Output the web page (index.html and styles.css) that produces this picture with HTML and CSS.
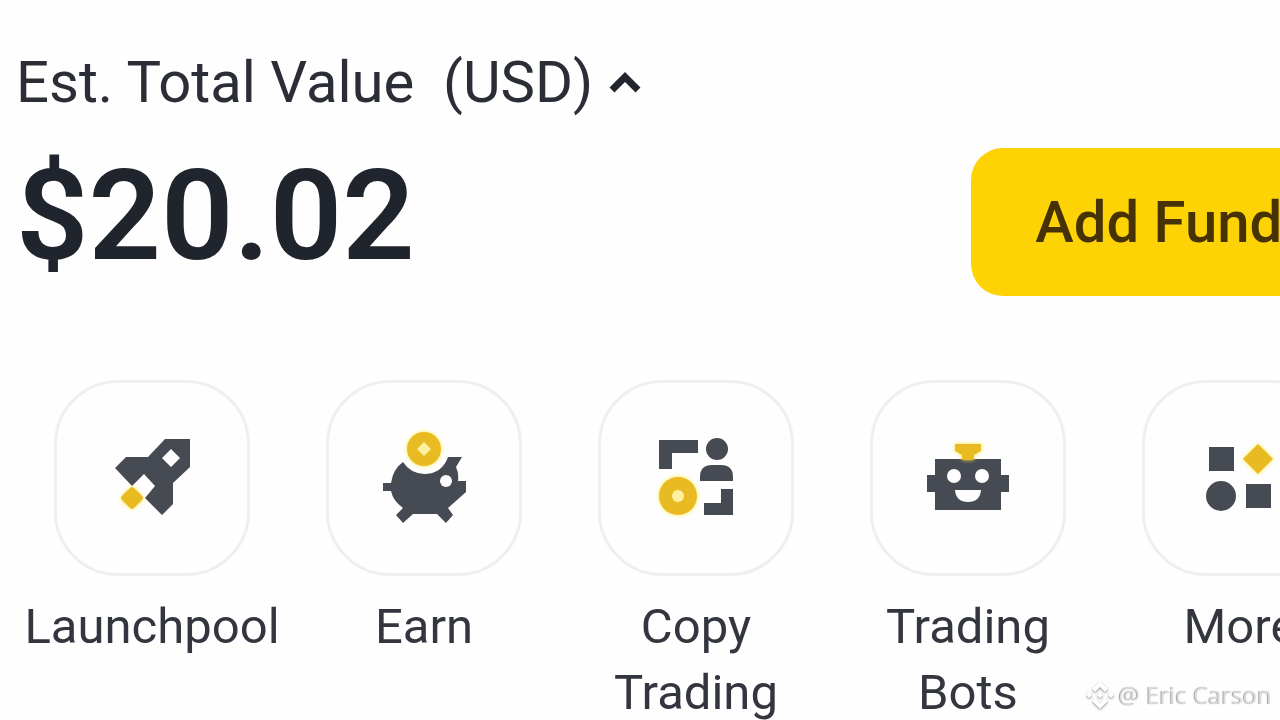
FILE: index.html
```
<!DOCTYPE html>
<html lang="en">

	<head>
		<meta charset="UTF-8">
		<meta name="viewport" content="width=device-width, initial-scale=1.0">
		<title>Wallet</title>
		<link rel="stylesheet" href="styles.css">
	</head>

	<body>
		<div class="wallet">
			<div class="title">
				<span>Est. Total Value&nbsp; (USD)</span>
				<button class="toggle" type="button" aria-label="Hide details">
					<svg width="32" height="24" viewBox="0 0 32 24"><path d="M3 20L16 7l13 13" /></svg>
				</button>
			</div>

			<div class="balance">
				<div class="amount">$20.02</div>
				<button class="add" type="button">Add Funds</button>
			</div>

			<!-- shortcuts -->
			<div class="menu">
				<a class="item" href="#">
					<span class="tile">
						<svg class="icon" viewBox="0 0 96 96">
							<path fill-rule="evenodd" d="M61 9h25v28L69 53v21L58 85 41 68l10-12-11-12-12 12-17-18 11-11h22zM67 19l-9 9 9 9 9-9z" />
							<path class="gold" d="M28 57q1 0 2 1l8 8q2 2 0 4l-8 8q-2 2-4 0l-8-8q-2-2 0-4l8-8q1-1 2-1z" />
						</svg>
					</span>
					<span class="label">Launchpool</span>
				</a>
				<a class="item" href="#">
					<span class="tile">
						<svg class="icon" viewBox="0 0 96 96">
							<path d="M27 32Q17 39 15 53H7v8h8q2 10 12 17l-7 7 7 8 10-9h24l9 9 7-8-5-7 18-16V51h-8q1-8-2-14l6-10H72Q66 44 48 44 34 43 27 32z" />
							<circle class="hole" cx="70" cy="51" r="6" />
							<circle class="gold" cx="48" cy="19" r="17" />
							<path class="shine" d="M48 12l7 7-7 7-7-7z" />
						</svg>
					</span>
					<span class="label">Earn</span>
				</a>
				<a class="item" href="#">
					<span class="tile">
						<svg class="icon" viewBox="0 0 96 96">
							<path d="M11 10h39v13H24v16H11zM73 59h12v26H56V73h17zM52 51v-4q0-12 12-12h9q12 0 12 12v4z" />
							<circle cx="69" cy="19" r="11" />
							<circle class="gold" cx="30" cy="66" r="19" />
							<circle class="shine" cx="30" cy="66" r="6" />
						</svg>
					</span>
					<span class="label">Copy Trading</span>
				</a>
				<a class="item" href="#">
					<span class="tile">
						<svg class="icon" viewBox="0 0 96 96">
							<path d="M15 29h66v16h8v17h-8v18H15V62H7V45h8z" />
							<circle class="hole" cx="34" cy="46" r="7" />
							<circle class="hole" cx="62" cy="46" r="7" />
							<path class="hole" d="M35 60h26q-1 12-13 12T35 60z" />
							<path class="gold" d="M35 14h26v7l-7 4v5H42v-5l-7-4z" />
						</svg>
					</span>
					<span class="label">Trading Bots</span>
				</a>
				<a class="item" href="#">
					<span class="tile">
						<svg class="icon" viewBox="0 0 96 96">
							<path d="M17 17h25v24H17zM54 54h25v24H54z" />
							<circle cx="29" cy="66" r="15" />
							<path class="gold" d="M66 14l15 15-15 15-15-15z" />
						</svg>
					</span>
					<span class="label">More</span>
				</a>
			</div>
		</div>

		<div class="watermark">
			<svg width="28" height="28" viewBox="0 0 28 28">
				<path d="M14 0l8 8-3 3-5-5-5 5-3-3zM14 28l8-8-3-3-5 5-5-5-3 3zM3 11l3 3-3 3-3-3zM25 11l3 3-3 3-3-3zM14 11l3 3-3 3-3-3z" />
			</svg>
			<span>@ Eric Carson</span>
		</div>
	</body>

</html>
```
FILE: styles.css
```
* {
	margin: 0;
	padding: 0;
	box-sizing: border-box;
}

body {
	background: #fefefe;
	color: #2b2e37;
	font-family: Roboto, "Liberation Sans", sans-serif;
	overflow: hidden;
}

button {
	border: 0;
	background: none;
	color: inherit;
	font-family: inherit;
	cursor: pointer;
}

/* a bit wider than the window, the right side runs off screen */
.wallet {
	width: 108.75vw;
	padding: 50px 16px 0;
}

.title {
	display: flex;
	align-items: center;
	gap: 16px;
	margin-bottom: 34px;
	font-size: 58px;
	line-height: 64px;
}

.toggle {
	display: flex;
}

.toggle path {
	fill: none;
	stroke: #22252d;
	stroke-width: 7;
}

.balance {
	display: flex;
	justify-content: space-between;
	align-items: flex-start;
	margin-bottom: 84px;
}

.amount {
	color: #20242c;
	font-size: 127px;
	font-weight: 600;
	line-height: 136px;
}

.add {
	height: 148px;
	padding: 0 64px;
	border-radius: 32px;
	background: #fed305;
	color: #463204;
	font-size: 58px;
	font-weight: 500;
	white-space: nowrap;
}

.menu {
	display: grid;
	grid-template-columns: repeat(5, 1fr);
}

.item {
	display: flex;
	flex-direction: column;
	align-items: center;
	gap: 18px;
	color: #33363e;
	text-decoration: none;
}

.tile {
	display: flex;
	align-items: center;
	justify-content: center;
	width: 196px;
	height: 196px;
	border: 3px solid #edf0f0;
	border-radius: 64px;
}

.icon {
	width: 96px;
	height: 96px;
	fill: #464a53;
	overflow: visible;
}

.gold {
	fill: #e8bb22;
	filter: drop-shadow(0 0 2px #ffe94d);
}

.shine {
	fill: #fdf0a0;
}

.hole {
	fill: #fefefe;
}

.label {
	width: 200px;
	display: flex;
	justify-content: center;
	font-size: 49px;
	line-height: 66px;
	text-align: center;
}

.watermark {
	position: fixed;
	right: 8px;
	bottom: 8px;
	display: flex;
	align-items: center;
	gap: 4px;
	color: #ddd;
	font-family: "Open Sans", "Noto Sans", sans-serif;
	font-size: 24px;
	line-height: 34px;
	text-shadow: -1px 0 1px #999;
}

.watermark svg {
	fill: #fff;
	filter: drop-shadow(0 1px 1px #888);
}
```
